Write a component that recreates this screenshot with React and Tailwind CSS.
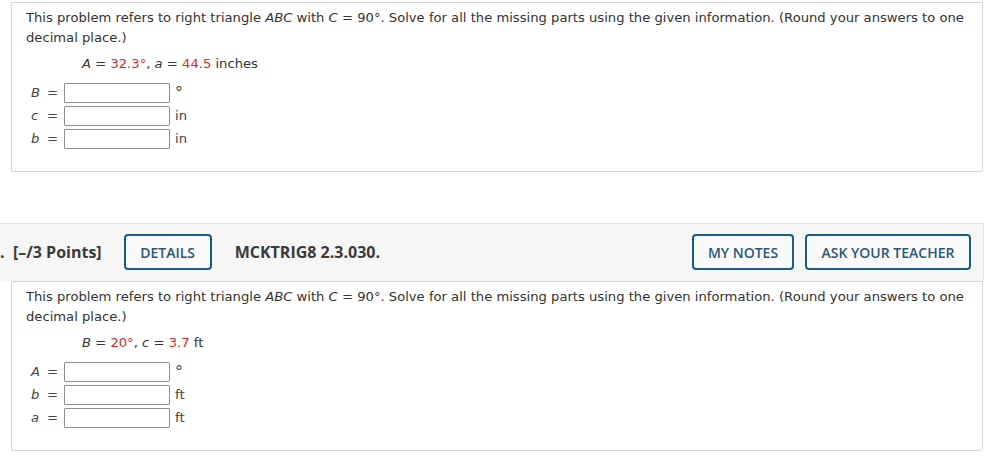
import React from 'react';

const problems = {
    first: {
        given: [['A', '32.3°'], ['a', '44.5', 'inches']],
        rows: [['B', '°'], ['c', 'in'], ['b', 'in']],
    },
    second: {
        given: [['B', '20°'], ['c', '3.7', 'ft']],
        rows: [['A', '°'], ['b', 'ft'], ['a', 'ft']],
    },
};

const Given = ({ items }) => (
    <p className="mt-[6px] pl-[56px] leading-[20px]">
        {items.map(([v, val, unit], i) => (
            <span key={v}>
                <i>{v}</i> = <span className="text-[#d42a2f]">{val}</span>
                {unit ? ` ${unit}` : ''}
                {i < items.length - 1 ? ', ' : ''}
            </span>
        ))}
    </p>
);

const Problem = ({ data }) => (
    <div className="mx-[11px] border border-[#d6d6d6] rounded-br-[3px] bg-white pl-[14px] pt-[5px] pb-[22px] text-[13.15px] text-[#333] font-['DejaVu_Sans',sans-serif] w-[972px]">
        <p className="leading-[20px] pr-[6px]">
            This problem refers to right triangle <i>ABC</i> with <i>C</i> = 90°. Solve for all the missing parts using the given information. (Round your answers to one decimal place.)
        </p>
        <Given items={data.given} />
        <div className="mt-[9px] flex flex-col gap-[3px]">
            {data.rows.map(([label, unit]) => (
                <div key={label} className="flex items-center h-[20px]">
                    <span className="w-[38px] pl-[5px] text-[#444] flex">
                        <i className="w-[16px]">{label}</i>=
                    </span>
                    <div className="w-[106px] h-[20px] border border-[#8f8f8f] rounded-[1px] bg-white" />
                    <span className={unit === '°' ? 'ml-[5px] text-[#444] text-[16px] leading-[20px]' : 'ml-[5px] text-[#444]'}>{unit}</span>
                </div>
            ))}
        </div>
    </div>
);

const OutlineButton = ({ children, className }) => (
    <button className={`h-[36px] border-2 border-[#1b5b84] rounded-[4px] text-[#2b5678] text-[14px] font-semibold bg-[#fafafa] ${className}`}>
        {children}
    </button>
);

const App = () => {
    return (
        <div className="w-[985px] h-[472px] bg-white overflow-hidden pt-[2px] font-['Open_Sans',sans-serif]">
            <Problem data={problems.first} />

            <div className="mt-[51px] w-[984px] h-[58px] bg-[#f6f6f6] border-t border-r border-[#e2e2e2] flex items-center pb-[1px]">
                <span className="text-[16px] font-bold text-[#3a3a3a] whitespace-nowrap">.&nbsp; [–/3 Points]</span>
                <OutlineButton className="ml-[22px] w-[88px]">DETAILS</OutlineButton>
                <span className="ml-[23px] text-[16px] font-bold text-[#3a3a3a]">MCKTRIG8 2.3.030.</span>
                <OutlineButton className="ml-auto w-[102px]">MY NOTES</OutlineButton>
                <OutlineButton className="ml-[11px] mr-[12px] w-[166px]">ASK YOUR TEACHER</OutlineButton>
            </div>

            <Problem data={problems.second} />
        </div>
    );
};

export default App;
